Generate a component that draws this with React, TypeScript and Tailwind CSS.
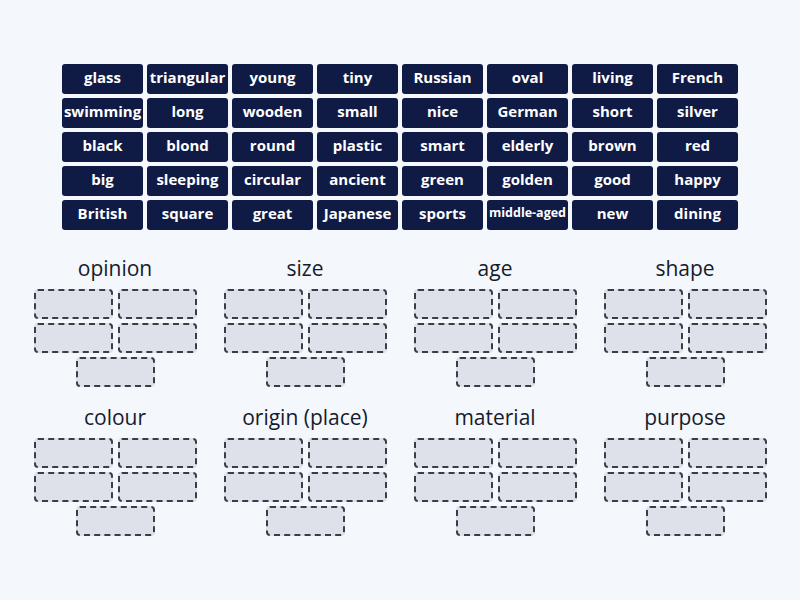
const words = [
  "glass", "triangular", "young", "tiny", "Russian", "oval", "living", "French",
  "swimming", "long", "wooden", "small", "nice", "German", "short", "silver",
  "black", "blond", "round", "plastic", "smart", "elderly", "brown", "red",
  "big", "sleeping", "circular", "ancient", "green", "golden", "good", "happy",
  "British", "square", "great", "Japanese", "sports", "middle-aged", "new", "dining",
];

const groups = [
  ["opinion", "size", "age", "shape"],
  ["colour", "origin (place)", "material", "purpose"],
];

function Slot() {
  return <div className="h-[30px] w-[79px] rounded-[4px] border-2 border-dashed border-[#3a3d45] bg-[#dfe1ea]" />;
}

function Group({ title }: { title: string }) {
  return (
    <div className="flex w-[164px] flex-col items-center">
      <div className="h-[25px] text-[21px] font-medium leading-[25px] text-[#161b2b]">{title}</div>
      <div className="mt-[8px] grid grid-cols-2 gap-x-[5px] gap-y-[4px]">
        <Slot />
        <Slot />
        <Slot />
        <Slot />
      </div>
      <div className="mt-[4px]">
        <Slot />
      </div>
    </div>
  );
}

export default function App() {
  return (
    <div
      className="h-[600px] w-[800px] overflow-hidden bg-[#f4f7fc]"
      style={{ fontFamily: '"Open Sans", "Noto Sans", sans-serif' }}
    >
      <div className="ml-[62px] mt-[64px] grid w-[676px] grid-cols-8 gap-x-[4px] gap-y-[4px]">
        {words.map((w) => (
          <div
            key={w}
            className={`flex h-[30px] items-center justify-center rounded-[3px] bg-[#0f1a45] pb-[3px] font-bold text-white ${
              w === "middle-aged" ? "text-[12.5px]" : "text-[15px]"
            }`}
          >
            {w}
          </div>
        ))}
      </div>
      <div className="ml-[33px] mt-[26px] flex flex-col gap-y-[18px]">
        {groups.map((row, i) => (
          <div key={i} className="flex gap-x-[26px]">
            {row.map((t) => (
              <Group key={t} title={t} />
            ))}
          </div>
        ))}
      </div>
    </div>
  );
}
